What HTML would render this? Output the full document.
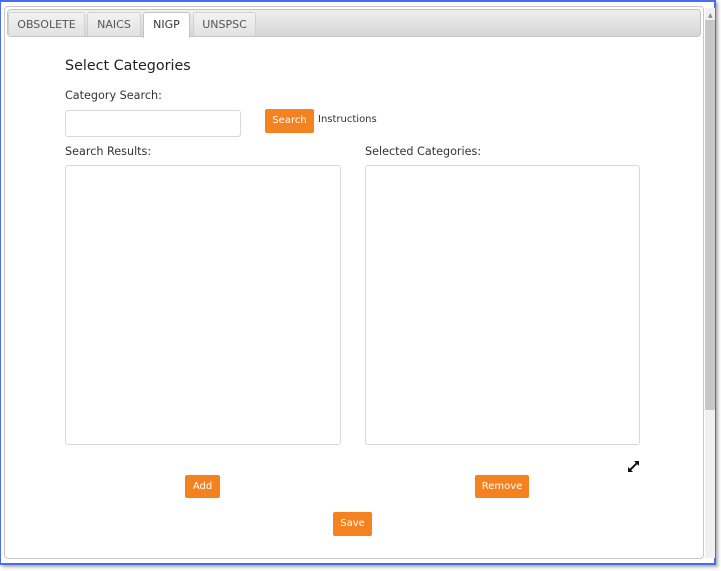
<!DOCTYPE html><html><head><style>
body{margin:0;width:721px;height:571px;background:#fff;position:relative;overflow:hidden;font-family:"DejaVu Sans","Liberation Sans",sans-serif;}
.frame{position:absolute;left:0;top:0;width:716px;height:565px;border:2px solid #4a6cf0;border-left:1px solid #4a6cf0;box-sizing:border-box;box-shadow:2px 2px 3px #aaa;}
.panel{position:absolute;left:4px;top:6px;width:700px;height:553px;border:1px solid #c8c8c8;border-radius:4px;box-sizing:border-box;}
.tabbar{position:absolute;left:7px;top:9px;width:694px;height:28px;border:1px solid #c4c4c4;border-radius:4px;background:linear-gradient(#f0f0f0,#d6d6d6);box-sizing:border-box;}
.tab{position:absolute;top:12px;height:24px;background:linear-gradient(#f2f2f2,#e2e2e2);border:1px solid #d0d0d0;border-bottom:none;font-size:11px;color:#555;text-align:center;line-height:24px;box-sizing:border-box;border-radius:3px 3px 0 0;}
.tab.act{background:#fff;height:26px;color:#333;border-color:#c4c4c4}
.sb{position:absolute;left:705px;top:8px;width:10px;height:550px;background:#f0f0f0}
.thumb{position:absolute;left:705px;top:20px;width:10px;height:390px;background:#c8c8c8}
.t{position:absolute;color:#333;font-size:11.2px}
.box{position:absolute;border:1px solid #d8d8d8;border-radius:3px;box-sizing:border-box;background:#fff}
.btn{position:absolute;background:#f58220;color:#fff;font-size:10px;text-align:center;border-radius:2px}
</style></head><body>
<div class="frame"></div>
<div class="panel"></div>
<div class="tabbar"></div>
<div class="tab" style="left:8px;width:77px">OBSOLETE</div>
<div class="tab" style="left:87px;width:54px">NAICS</div>
<div class="tab act" style="left:143px;width:47px">NIGP</div>
<div class="tab" style="left:193px;width:63px">UNSPSC</div>
<div class="sb"></div><div class="thumb"></div>
<div style="position:absolute;left:708px;top:12px;font-size:6px;color:#888">▲</div>
<div class="t" style="left:65px;top:58px;font-size:14.3px;color:#222">Select Categories</div>
<div class="t" style="left:65px;top:89px">Category Search:</div>
<div class="box" style="left:65px;top:110px;width:176px;height:27px"></div>
<div class="btn" style="left:265px;top:109px;width:49px;height:24px;line-height:24px">Search</div>
<div class="t" style="left:318px;top:114px;font-size:10px;color:#333">Instructions</div>
<div class="t" style="left:65px;top:145px">Search Results:</div>
<div class="t" style="left:365px;top:145px">Selected Categories:</div>
<div class="box" style="left:65px;top:165px;width:276px;height:280px"></div>
<div class="box" style="left:365px;top:165px;width:275px;height:280px"></div>
<svg style="position:absolute;left:626px;top:459px" width="15" height="15" viewBox="0 0 15 15"><path d="M3 12L12 3" stroke="#111" stroke-width="2"/><path d="M8 2h5v5z M2 8v5h5z" fill="#111"/></svg>
<div class="btn" style="left:185px;top:475px;width:35px;height:23px;line-height:23px">Add</div>
<div class="btn" style="left:475px;top:475px;width:54px;height:23px;line-height:23px">Remove</div>
<div class="btn" style="left:333px;top:512px;width:39px;height:24px;line-height:24px">Save</div>
</body></html>
